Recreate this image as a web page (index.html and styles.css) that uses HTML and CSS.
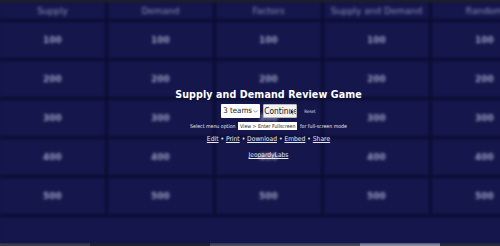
FILE: index.html
```html
<!DOCTYPE html>
<html>
<head>
<meta charset="utf-8">
<link rel="stylesheet" href="styles.css">
</head>
<body>
<div class="page">
  <div class="topstrip"></div>
  <div class="board">
    <div class="head">Supply</div><div class="head">Demand</div><div class="head">Factors</div><div class="head">Supply and Demand</div><div class="head">Random</div>
    <div class="cell">100</div><div class="cell">100</div><div class="cell">100</div><div class="cell">100</div><div class="cell">100</div>
    <div class="cell">200</div><div class="cell">200</div><div class="cell">200</div><div class="cell">200</div><div class="cell">200</div>
    <div class="cell">300</div><div class="cell">300</div><div class="cell">300</div><div class="cell">300</div><div class="cell">300</div>
    <div class="cell">400</div><div class="cell">400</div><div class="cell">400</div><div class="cell">400</div><div class="cell">400</div>
    <div class="cell">500</div><div class="cell">500</div><div class="cell">500</div><div class="cell">500</div><div class="cell">500</div>
    <div class="foot"></div>
  </div>
  <div class="bottomstrip"><span class="seg s1"></span><span class="seg s2"></span><span class="seg s3"></span><span class="seg s4"></span></div>
  <div class="overlay">
    <h1 class="title">Supply and Demand Review Game</h1>
    <div class="controls">
      <span class="select">3 teams<svg class="arrow" viewBox="0 0 6 4" width="5" height="3"><path d="M0.5 0.5 L3 3 L5.5 0.5" fill="none" stroke="#666" stroke-width="1"/></svg></span>
      <span class="btn">Continue<svg class="cursor" viewBox="0 0 6 9" width="5" height="8"><path d="M0.5 0.5 L0.5 7.5 L2.2 5.8 L3.4 8.5 L4.4 8 L3.3 5.4 L5.5 5.4 Z" fill="#222" stroke="#fff" stroke-width="0.6"/></svg></span>
      <span class="reset">Reset</span>
    </div>
    <div class="hint">Select menu option <span class="kbd">View &gt; Enter Fullscreen</span> for full-screen mode</div>
    <div class="links"><a>Edit</a> &bull; <a>Print</a> &bull; <a>Download</a> &bull; <a>Embed</a> &bull; <a>Share</a></div>
    <div class="brand"><a>JeopardyLabs</a></div>
  </div>
</div>
</body>
</html>
```
FILE: styles.css
```css
html, body {
  margin: 0;
  padding: 0;
  background: #12144a;
  overflow: hidden;
}
.page {
  position: relative;
  width: 537px;
  height: 246px;
  overflow: hidden;
  font-family: "DejaVu Sans Condensed", "DejaVu Sans", Verdana, sans-serif;
}
.topstrip {
  height: 3px;
  background: #1c1e2c;
}
.board {
  display: grid;
  grid-template-columns: repeat(5, 1fr);
  grid-template-rows: 16px repeat(5, 36px) 26px;
  gap: 3px;
  background: #0a0c30;
  filter: blur(1.4px);
  font-family: "DejaVu Sans", Verdana, sans-serif;
}
.head, .cell, .foot {
  background: #14164c;
  color: #9a9cc0;
  display: flex;
  align-items: center;
  justify-content: center;
}
.head {
  font-size: 9px;
  color: #8e90b6;
}
.cell {
  font-size: 9px;
  font-weight: bold;
}
.foot {
  grid-column: 1 / -1;
}
.bottomstrip {
  height: 3px;
  display: flex;
  background: #2a2c3a;
}
.seg { height: 3px; }
.s1 { width: 90px; background: #3c3e4c; }
.s2 { width: 120px; background: #202230; }
.s3 { width: 150px; background: #4a4c5c; }
.s4 { width: 80px; background: #8a8ca0; }
.overlay {
  position: absolute;
  left: 0;
  right: 0;
  top: 87px;
  text-align: center;
  color: #ffffff;
}
.title {
  margin: 0;
  font-size: 10.6px;
  font-weight: bold;
  line-height: 14px;
  letter-spacing: 0.1px;
}
.controls {
  margin-top: 2px;
  display: flex;
  justify-content: center;
  align-items: center;
  gap: 3px;
  height: 16px;
}
.select {
  background: #fff;
  color: #111;
  font-size: 7.8px;
  height: 14px;
  line-height: 14px;
  width: 39px;
  box-sizing: border-box;
  padding-left: 2px;
  text-align: left;
  white-space: nowrap;
  border-radius: 1px;
  position: relative;
}
.arrow {
  position: absolute;
  right: 2px;
  top: 6px;
}
.btn {
  background: #f2f2f2;
  color: #111;
  font-size: 8.3px;
  height: 14px;
  width: 34px;
  box-sizing: border-box;
  border: 1px solid #bbb;
  line-height: 12px;
  white-space: nowrap;
  overflow: hidden;
  border-radius: 1px;
  position: relative;
}
.cursor {
  position: absolute;
  left: 26px;
  top: 3px;
}
.reset {
  font-size: 4.5px;
  margin-left: 4px;
  color: #dde;
}
.hint {
  margin-top: 2px;
  font-size: 5.2px;
  line-height: 10px;
  color: #e8e8f0;
}
.kbd {
  background: #fff;
  color: #222;
  padding: 1px 2px;
  margin: 0 1px;
}
.links {
  margin-top: 3px;
  font-size: 6.7px;
  line-height: 10px;
  color: #e8e8f0;
}
.links a, .brand a {
  color: #e8e8f0;
  text-decoration: underline;
}
.brand {
  margin-top: 6px;
  font-size: 6.6px;
  line-height: 10px;
}
```
